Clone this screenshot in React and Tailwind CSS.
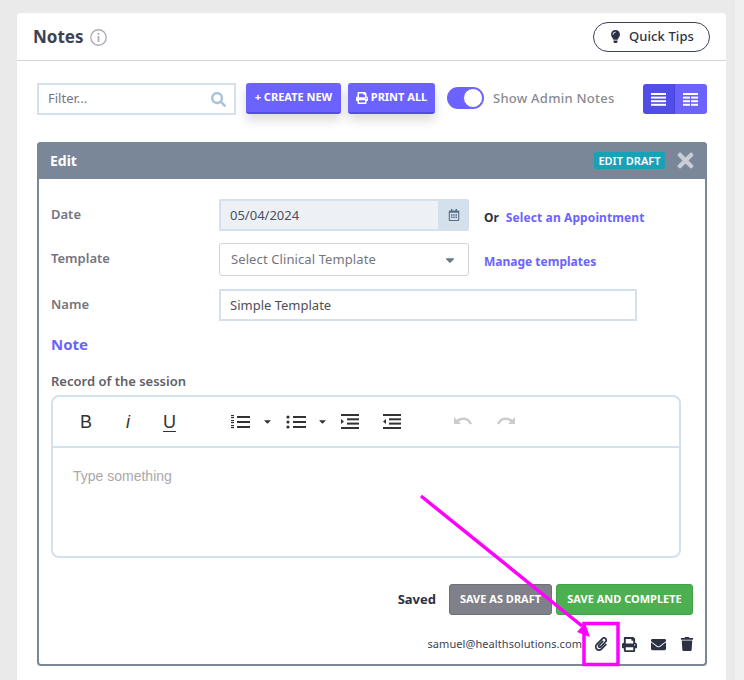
import React from 'react';
import { FaSearch, FaPrint, FaLightbulb, FaTimes, FaRegCalendarAlt, FaPaperclip, FaEnvelope, FaTrash, FaCaretDown } from 'react-icons/fa';

const font = "font-['Noto_Sans','Open_Sans',sans-serif]";

const FieldLabel = ({ children }) => (
  <span className="mt-[6px] block w-[168px] shrink-0 text-[13px] font-semibold text-[#75757f]">{children}</span>
);

const ListLines = () => (
  <>
    <rect x="7" y="2" width="13" height="2" />
    <rect x="7" y="7" width="13" height="2" />
    <rect x="7" y="12" width="13" height="2" />
  </>
);

const NumberedIcon = () => (
  <svg width="20" height="16" viewBox="0 0 20 16" fill="#333">
    <ListLines />
    <rect x="1" y="1" width="3" height="1.2" />
    <rect x="1" y="3" width="3" height="1.2" />
    <rect x="1" y="6" width="3" height="1.2" />
    <rect x="1" y="8" width="3" height="1.2" />
    <rect x="1" y="11" width="3" height="1.2" />
    <rect x="1" y="13" width="3" height="1.2" />
  </svg>
);

const BulletIcon = () => (
  <svg width="20" height="16" viewBox="0 0 20 16" fill="#333">
    <ListLines />
    <circle cx="2" cy="3" r="1.6" />
    <circle cx="2" cy="8" r="1.6" />
    <circle cx="2" cy="13" r="1.6" />
  </svg>
);

const IndentIcon = ({ out }) => (
  <svg width="18" height="15" viewBox="0 0 18 15" fill="#333">
    <rect x="0" y="0" width="18" height="2" />
    <rect x="6" y="4.3" width="12" height="2" />
    <rect x="6" y="8.6" width="12" height="2" />
    <rect x="0" y="13" width="18" height="2" />
    {out ? <path d="M3 5l-3 2.5 3 2.5z" /> : <path d="M0 5l3 2.5-3 2.5z" />}
  </svg>
);

const UndoIcon = ({ flip }) => (
  <svg width="18" height="11" viewBox="0 0 18 11" fill="#ccc" className={flip ? '-scale-x-100' : ''}>
    <path d="M0 1v7h7L4.6 5.6C6 4.6 7.6 4 9.4 4c2.900 0 5.400 1.900 6.300 4.600L18 7.800C16.800 4 13.400 1.500 9.400 1.500 6.800 1.500 4.600 2.400 2.700 3.700z" />
  </svg>
);

export default function App() {
  return (
    <div className={`relative h-[680px] w-[744px] overflow-hidden bg-[#eaeaea] ${font}`}>
      {/* scrollbar track */}
      <div className="absolute right-0 top-0 h-full w-[9px] bg-[#f0f0f0]"></div>

      <div className="ml-[17px] mt-[13px] h-[700px] w-[709px] rounded-t-[4px] bg-white">
        {/* title bar */}
        <div className="flex h-[48px] items-center justify-between border-b border-[#d4d4d6] pl-[16px] pr-[16px]">
          <div className="flex items-center gap-[6px]">
            <span className="text-[17px] font-bold text-[#3b4256]">Notes</span>
            <svg width="17" height="17" viewBox="0 0 17 17" fill="none" className="mt-[2px]">
              <circle cx="8.500" cy="8.500" r="7.700" stroke="#aeaeb8" strokeWidth="1.400" />
              <rect x="7.600" y="7" width="1.800" height="6" fill="#aeaeb8" />
              <rect x="7.600" y="4" width="1.800" height="1.800" fill="#aeaeb8" />
            </svg>
          </div>
          <button className="flex h-[30px] w-[117px] items-center justify-center gap-[7px] rounded-full border border-[#3b4256] text-[13px] font-medium tracking-[0.1px] text-[#2c3144]">
            <FaLightbulb size={13} className="text-[#2c3144]" />
            Quick Tips
          </button>
        </div>

        {/* filter row */}
        <div className="mt-[22px] flex items-start pl-[20px]">
          <div className="flex h-[32px] w-[199px] items-center justify-between border-2 border-[#d4e0ec] pl-[9px] pr-[8px]">
            <span className="text-[13px] text-[#75757f]">Filter...</span>
            <FaSearch size={15} className="text-[#a9c2d8]" />
          </div>
          <button className="ml-[10px] h-[31px] w-[95px] rounded-[3px] border-b-2 border-[#524de8] bg-[#6c63ff] text-[11px] font-bold text-white shadow-[0_6px_12px_rgba(0,0,0,0.15)]">
            + CREATE NEW
          </button>
          <button className="ml-[7px] flex h-[31px] w-[87px] items-center justify-center gap-[3px] rounded-[3px] border-b-2 border-[#524de8] bg-[#6c63ff] text-[11px] font-bold text-white shadow-[0_6px_12px_rgba(0,0,0,0.15)]">
            <FaPrint size={12} />
            PRINT ALL
          </button>
          <div className="ml-[12px] mt-[4px] flex h-[22px] w-[37px] items-center justify-end rounded-full bg-[#6c63ff] pr-[1px]">
            <div className="h-[20px] w-[20px] rounded-full border border-[#6c63ff] bg-white"></div>
          </div>
          <span className="ml-[9px] mt-[6px] text-[13px] font-medium tracking-[0.25px] text-[#8a8a94]">Show Admin Notes</span>
          <div className="ml-[28px] mt-[1px] flex h-[30px] w-[64px] overflow-hidden rounded-[3px]">
            <div className="flex w-[32px] items-center justify-center border-r border-[#4a44d6] bg-[#524de8]">
              <svg width="15" height="13" viewBox="0 0 15 13" fill="white">
                <rect y="0" width="15" height="2" />
                <rect y="3.600" width="15" height="2" />
                <rect y="7.200" width="15" height="2" />
                <rect y="10.800" width="15" height="2" />
              </svg>
            </div>
            <div className="flex flex-1 items-center justify-center bg-[#6c63ff]">
              <svg width="15" height="13" viewBox="0 0 15 13" fill="white">
                <rect y="0" width="15" height="2" />
                <rect y="3.600" width="7" height="2" />
                <rect x="8" y="3.600" width="7" height="2" />
                <rect y="7.200" width="7" height="2" />
                <rect x="8" y="7.200" width="7" height="2" />
                <rect y="10.800" width="7" height="2" />
                <rect x="8" y="10.800" width="7" height="2" />
              </svg>
            </div>
          </div>
        </div>

        {/* edit panel */}
        <div className="ml-[20px] mt-[27px] h-[524px] w-[670px] rounded-[4px] border-2 border-t-0 border-[#7a8799] bg-white">
          <div className="-mx-[2px] flex h-[37px] items-center justify-between rounded-t-[4px] bg-[#7a8799] pl-[13px] pr-[10px]">
            <span className="text-[14px] font-bold text-white">Edit</span>
            <div className="flex items-center gap-[9px]">
              <span className="rounded-[2px] bg-[#17a2b8] px-[4.500px] text-[11px] font-semibold leading-[17px] text-white">EDIT DRAFT</span>
              <FaTimes size={23} className="text-[#c9ced6]" />
            </div>
          </div>

          <div className="pl-[12px]">
            <div className="mt-[20px] flex items-start">
              <FieldLabel>Date</FieldLabel>
              <div className="flex h-[32px] w-[250px] rounded-[2px] border-2 border-r-0 border-[#d4e0ec] bg-[#edf1f6]">
                <span className="flex-1 pl-[9px] text-[13px] leading-[28px] text-[#4b4f5c]">05/04/2024</span>
                <div className="flex w-[31px] items-center justify-center bg-[#d4e0ec]">
                  <FaRegCalendarAlt size={12} className="text-[#5a6f86]" />
                </div>
              </div>
              <span className="ml-[15px] mt-[10px] text-[12px] font-bold leading-[18px] text-[#2c3144]">Or</span>
              <span className="ml-[7px] mt-[10px] text-[12px] font-bold leading-[18px] tracking-[0.1px] text-[#6c63ff]">Select an Appointment</span>
            </div>

            <div className="mt-[12px] flex items-start">
              <FieldLabel>Template</FieldLabel>
              <div className="flex h-[33px] w-[250px] items-center justify-between rounded-[3px] border border-[#d4d4d6] pl-[11px] pr-[11px]">
                <span className="text-[13px] tracking-[0.1px] text-[#75757f]">Select Clinical Template</span>
                <FaCaretDown size={14} className="text-[#66788c]" />
              </div>
              <span className="ml-[15px] mt-[10px] text-[12px] font-bold leading-[18px] text-[#6c63ff]">Manage templates</span>
            </div>

            <div className="mt-[13px] flex items-start">
              <FieldLabel>Name</FieldLabel>
              <div className="h-[32px] w-[418px] border-2 border-[#d4e0ec] pl-[9px] text-[13px] leading-[28px] text-[#4b4f5c]">Simple Template</div>
            </div>

            <div className="mt-[12px] text-[15px] font-bold leading-[22px] text-[#6c63ff]">Note</div>
            <div className="mt-[17px] text-[13px] font-semibold leading-[18px] text-[#5f5f69]">Record of the session</div>

            {/* editor */}
            <div className="mt-[5px] h-[163px] w-[630px] rounded-[8px] border-2 border-[#d4e0ec]">
              <div className="flex h-[51px] items-center border-b-2 border-[#d4e0ec] font-['Liberation_Sans',sans-serif] text-[#333]">
                <span className="ml-[27px] w-[16px] text-[18px] leading-none">B</span>
                <span className="ml-[30px] w-[10px] text-[18px] italic leading-none">i</span>
                <span className="ml-[27px] w-[15px] text-[18px] leading-none underline underline-offset-[3px]">U</span>
                <div className="ml-[52px]"><NumberedIcon /></div>
                <FaCaretDown size={11} className="ml-[12px] text-[#333]" />
                <div className="ml-[13px]"><BulletIcon /></div>
                <FaCaretDown size={11} className="ml-[11px] text-[#333]" />
                <div className="ml-[13px]"><IndentIcon /></div>
                <div className="ml-[24px]"><IndentIcon out /></div>
                <div className="ml-[53px]"><UndoIcon /></div>
                <div className="ml-[25px]"><UndoIcon flip /></div>
              </div>
              <div className="pl-[20px] pt-[19px] font-['Liberation_Sans',sans-serif] text-[14px] leading-[18px] text-[#a9a9a9]">Type something</div>
            </div>

            {/* save buttons */}
            <div className="mt-[26px] flex items-center justify-end pr-[12px]">
              <span className="mr-[13px] text-[13px] font-bold text-[#2c3144]">Saved</span>
              <button className="h-[31px] w-[103px] rounded-[3px] border border-[#6f6f78] bg-[#80808a] text-[11px] font-bold text-white">SAVE AS DRAFT</button>
              <button className="ml-[4px] h-[31px] w-[137px] rounded-[3px] border border-[#43a047] bg-[#4caf50] text-[11px] font-bold text-white">SAVE AND COMPLETE</button>
            </div>

            <div className="mt-[21px] flex items-center justify-end pr-[11px]">
              <span className="mr-[12px] text-[11px] tracking-[0.08px] text-[#3b4256]">samuel@healthsolutions.com</span>
              <FaPaperclip size={14} className="text-[#2c3144]" />
              <FaPrint size={15} className="ml-[14px] text-[#2c3144]" />
              <FaEnvelope size={15} className="ml-[14px] text-[#2c3144]" />
              <FaTrash size={14} className="ml-[14px] text-[#2c3144]" />
            </div>
          </div>
        </div>
      </div>

      {/* screenshot annotation */}
      <svg width="744" height="680" className="pointer-events-none absolute left-0 top-0">
        <line x1="421" y1="496" x2="582" y2="626" stroke="#ff00ff" strokeWidth="3.500" />
        <path d="M590 637l-13-5 8-9z" fill="#ff00ff" />
        <rect x="584" y="623.500" width="34" height="41" fill="none" stroke="#ff00ff" strokeWidth="3.500" />
      </svg>
    </div>
  );
}
